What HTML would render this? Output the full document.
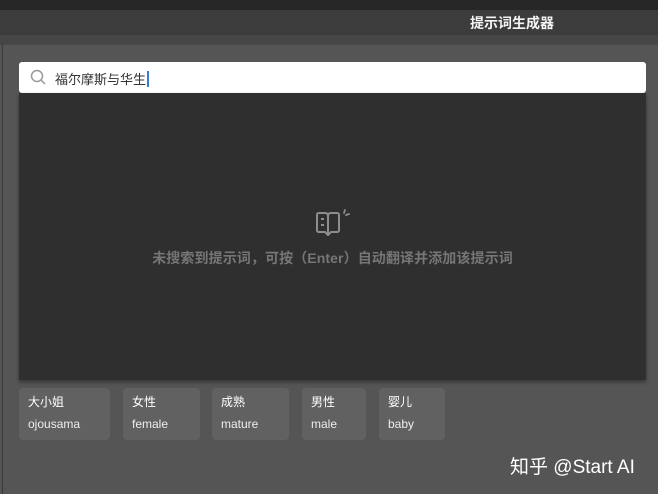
<!DOCTYPE html>
<html><head><meta charset="utf-8"><style>
*{margin:0;padding:0;box-sizing:border-box}
body{width:658px;height:494px;overflow:hidden;background:#545454;font-family:"Liberation Sans","Noto Sans CJK SC",sans-serif;position:relative}
.top{position:absolute;left:0;top:0;width:658px;height:10px;background:#272727}
.bar{position:absolute;left:0;top:10px;width:658px;height:25px;background:#3c3c3c;color:#f4f4f4;font-size:14px;font-weight:600}
.bar span{position:absolute;left:470px;top:3px}
.band{position:absolute;left:0;top:35px;width:658px;height:10px;background:#464646}
.panel{position:absolute;left:2px;top:44px;width:656px;height:450px;background:#555;border-left:1px solid #3a3a3a;border-top:1px solid #4a4a4a}
.search{position:absolute;left:19px;top:62px;width:627px;height:31px;background:#fff;border-radius:3px}
.search svg{position:absolute;left:11px;top:7px}
.search .t{position:absolute;left:36px;top:7px;font-size:13px;color:#333}
.caret{display:inline-block;width:1.5px;height:16px;background:#3a7bd5;vertical-align:-3px;margin-left:1px}
.dark{position:absolute;left:19px;top:93px;width:627px;height:287px;background:#2f2f2f;box-shadow:0 2px 4px rgba(0,0,0,.4)}
.empty{position:absolute;left:0;width:100%;top:155px;text-align:center;font-size:14px;color:#767676;font-weight:600;letter-spacing:0.1px}
.icon{position:absolute;left:294px;top:113px}
.chip{position:absolute;top:388px;height:52px;background:#616161;border-radius:4px;color:#fff;padding:6px 0 0 9px}
.chip .a{font-size:12px;line-height:16px}
.chip .b{font-size:12px;line-height:16px;margin-top:6px;color:#eee}
.wm{position:absolute;left:510px;top:452px;color:#fff;font-size:19px}
</style></head><body>
<div class="top"></div>
<div class="bar"><span>提示词生成器</span></div>
<div class="band"></div>
<div class="panel"></div>
<div class="search">
<svg width="17" height="17" viewBox="0 0 17 17"><circle cx="7" cy="7" r="5.5" fill="none" stroke="#999" stroke-width="1.5"/><line x1="11" y1="11" x2="15" y2="15" stroke="#999" stroke-width="1.5"/></svg>
<div class="t">福尔摩斯与华生<span class="caret"></span></div>
</div>
<div class="dark">
<svg class="icon" width="40" height="34" viewBox="0 0 40 34"><path d="M6 7h6c2 0 3 1 3 3v18M6 7c-1.5 0-2 .5-2 2v15c0 1.5.5 2 2 2h6l3 3 3-3h6c1.5 0 2-.5 2-2V9c0-1.5-.5-2-2-2h-6c-2 0-3 1-3 3" fill="none" stroke="#8e8e8e" stroke-width="2" stroke-linejoin="round"/><path d="M8 13h3M8 19h3" stroke="#8e8e8e" stroke-width="2"/><path d="M32 4l-1 3M36 8l-3 1" stroke="#8e8e8e" stroke-width="1.8" stroke-linecap="round"/></svg>
<div class="empty">未搜索到提示词，可按（Enter）自动翻译并添加该提示词</div>
</div>
<div class="chip" style="left:19px;width:91px"><div class="a">大小姐</div><div class="b">ojousama</div></div>
<div class="chip" style="left:123px;width:77px"><div class="a">女性</div><div class="b">female</div></div>
<div class="chip" style="left:212px;width:77px"><div class="a">成熟</div><div class="b">mature</div></div>
<div class="chip" style="left:302px;width:64px"><div class="a">男性</div><div class="b">male</div></div>
<div class="chip" style="left:379px;width:66px"><div class="a">婴儿</div><div class="b">baby</div></div>
<div class="wm">知乎 @Start AI</div>
</body></html>
